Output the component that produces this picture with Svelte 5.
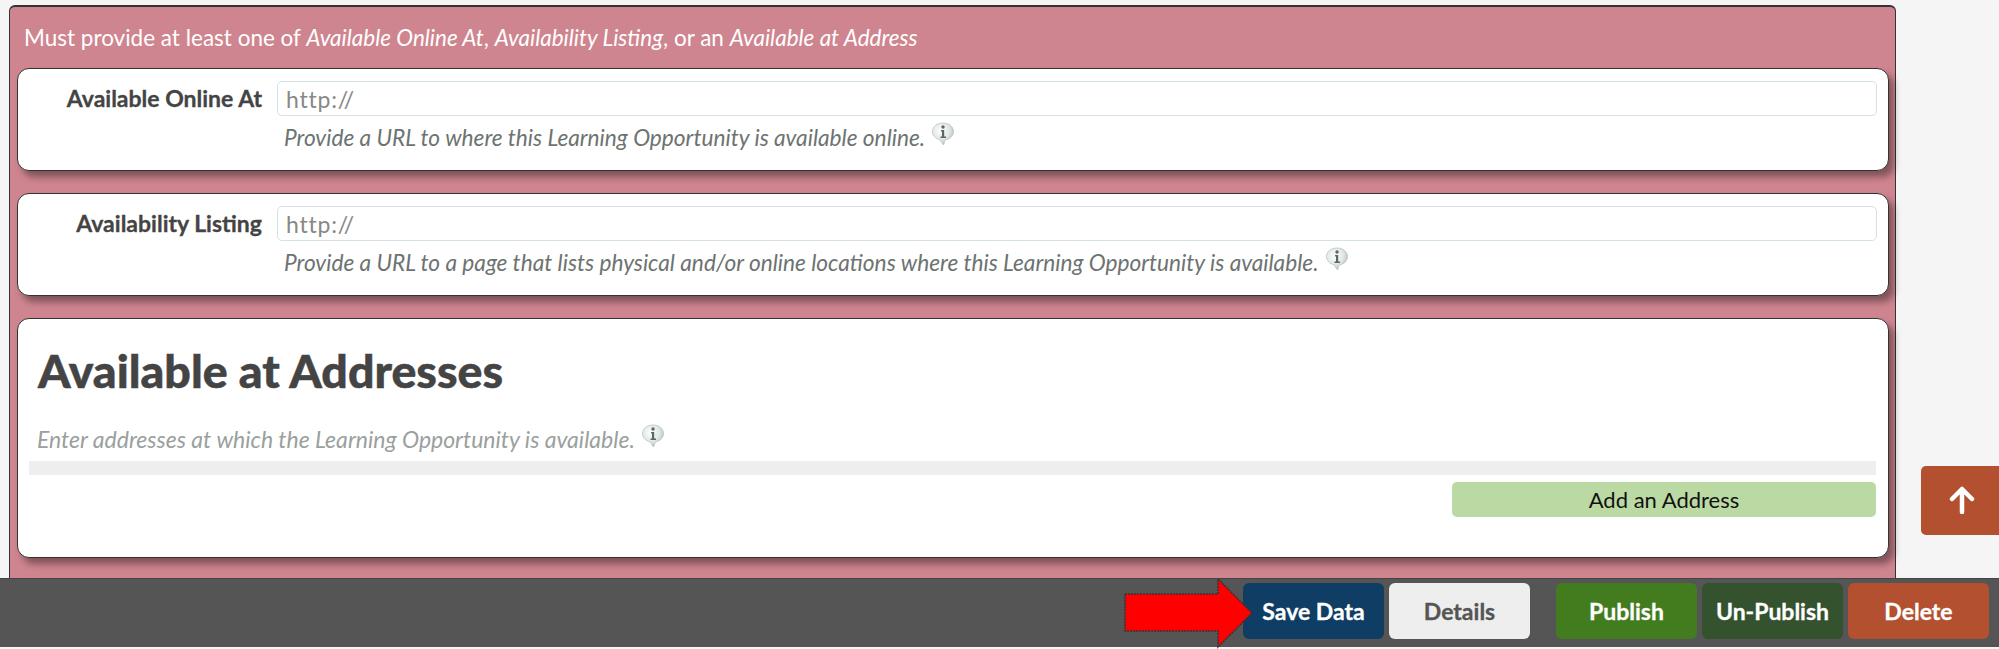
<script>
  const fields = [
    { label: 'Available Online At', help: 'Provide a URL to where this Learning Opportunity is available online.' },
    { label: 'Availability Listing', help: 'Provide a URL to a page that lists physical and/or online locations where this Learning Opportunity is available.' }
  ];
</script>

{#snippet infoIcon()}
  <svg class="info" viewBox="0 0 24 24" width="24" height="24" aria-hidden="true">
    <defs>
      <radialGradient id="bubble" cx="0.4" cy="0.35" r="0.75">
        <stop offset="0" stop-color="#ffffff" />
        <stop offset="0.55" stop-color="#dfe7e4" />
        <stop offset="1" stop-color="#a3b3ae" />
      </radialGradient>
    </defs>
    <path d="M12 1C5.9 1 1.5 4.8 1.5 9.5c0 4.2 3.4 7.400 7.500 8.200L12.500 23l1.800-5.200c4.800-.6 8.200-4 8.200-8.300C22.500 4.800 18.100 1 12 1z" fill="url(#bubble)" stroke="#b7c4c0" stroke-width="0.8" />
    <circle cx="12" cy="5" r="1.700" fill="#5d6664" />
    <path d="M10 8h3.200v6.500H15V16H9.500v-1.500h1.500V9.500H10z" fill="#5d6664" />
  </svg>
{/snippet}

<div class="panel">
  <p class="notice">Must provide at least one of <em>Available Online At</em>, <em>Availability Listing</em>, or an <em>Available at Address</em></p>

  {#each fields as field}
    <div class="card field">
      <label class="field-label" for={field.label}>{field.label}</label>
      <div class="field-body">
        <input id={field.label} type="text" placeholder="http://" />
        <p class="help">{field.help} {@render infoIcon()}</p>
      </div>
    </div>
  {/each}

  <div class="card addresses">
    <h2>Available at Addresses</h2>
    <p class="help light">Enter addresses at which the Learning Opportunity is available. {@render infoIcon()}</p>
    <div class="address-list"></div>
    <div class="add-row">
      <button class="add">Add an Address</button>
    </div>
  </div>
</div>

<button class="to-top" aria-label="Back to top">
  <svg viewBox="0 0 26 28" width="26" height="28">
    <path d="M13 26V3M3 13L13 3l10 10" fill="none" stroke="#fff" stroke-width="4.500" stroke-linecap="round" stroke-linejoin="round" />
  </svg>
</button>

<div class="bottom-bar">
  <div class="group">
    <button class="save">Save Data</button>
    <button class="details">Details</button>
  </div>
  <div class="group">
    <button class="publish">Publish</button>
    <button class="unpublish">Un-Publish</button>
    <button class="delete">Delete</button>
  </div>
</div>

<svg class="callout" width="130" height="72" viewBox="0 0 130 72" aria-hidden="true">
  <polygon points="1,17 94,17 94,2 128,36 94,70 94,54 1,54" fill="#ff0000" stroke="#333" stroke-width="1.500" stroke-dasharray="2 1" />
</svg>

<style>
  :global(body) {
    margin: 0;
    background: #f5f5f5;
    font-family: Lato, "Liberation Sans", sans-serif;
    color: #444;
  }

  p, h2 {
    margin: 0;
  }

  .panel {
    box-sizing: border-box;
    width: 1887px;
    height: 600px;
    margin: 5px 0 0 9px;
    padding: 0 7px;
    background: #cf858f;
    border: 1px solid #333;
    border-top-width: 2px;
    border-bottom: none;
    border-radius: 6px 6px 0 0;
  }

  .notice {
    height: 61px;
    padding: 11px 7px 0;
    box-sizing: border-box;
    color: #fff;
    font-size: 22.500px;
    line-height: 40px;
  }

  .card {
    box-sizing: border-box;
    width: 1872px;
    background: #fff;
    border: 1.500px solid #333;
    border-radius: 12px;
    box-shadow: 5px 6px 7px rgba(0, 0, 0, 0.38);
  }

  .field {
    display: grid;
    grid-template-columns: 244px 1fr;
    column-gap: 15px;
    height: 103px;
    margin-bottom: 22px;
    padding: 12px 11px 0 0;
  }

  .field-label {
    font-weight: 700;
    font-size: 23px;
    line-height: 34px;
    text-align: right;
    -webkit-text-stroke: 0.3px #444;
  }

  input {
    display: block;
    box-sizing: border-box;
    width: 100%;
    height: 35px;
    padding: 0 8px;
    border: 1.500px solid #d5e2e2;
    border-radius: 5px;
    font: 23px Lato, "Liberation Sans", sans-serif;
    letter-spacing: 0.8px;
    outline: none;
  }

  input::placeholder {
    color: #888;
  }

  .help {
    margin-top: 5px;
    padding-left: 7px;
    color: #6d7371;
    font-style: italic;
    font-size: 22.700px;
    line-height: 34px;
    white-space: nowrap;
  }

  .help.light {
    color: #9aa09e;
    margin-top: 0;
    padding: 27px 0 0 8px;
    height: 39px;
    font-size: 23px;
  }

  .info {
    vertical-align: 0;
    margin-left: 1px;
  }

  .addresses {
    height: 240px;
    padding: 0 12px 0 11px;
  }

  h2 {
    padding: 26px 0 0 9px;
    font-size: 46.500px;
    line-height: 50px;
    font-weight: 900;
    color: #444;
    -webkit-text-stroke: 0.5px #444;
  }

  .address-list {
    height: 14px;
    background: #eeeeee;
  }

  .add-row {
    display: flex;
    justify-content: flex-end;
    margin-top: 7px;
  }

  button {
    border: none;
    font-family: inherit;
    cursor: pointer;
  }

  .add {
    width: 424px;
    height: 35px;
    background: #bbdaa3;
    border-radius: 5px;
    color: #111;
    font-size: 22px;
  }

  .to-top {
    position: fixed;
    right: 0;
    top: 466px;
    width: 78px;
    height: 69px;
    padding: 0 0 2px 4px;
    display: flex;
    align-items: center;
    justify-content: center;
    background: #b3502f;
    border-radius: 5px 0 0 5px;
  }

  .bottom-bar {
    position: fixed;
    left: 0;
    right: 0;
    top: 578px;
    height: 69px;
    box-sizing: border-box;
    display: flex;
    justify-content: flex-end;
    align-items: center;
    gap: 26px;
    padding: 0 10px 5px 0;
    background: #555;
    border-top: 1px solid #444;
  }

  .group {
    display: flex;
    gap: 5px;
  }

  .bottom-bar button {
    width: 141px;
    height: 56px;
    border-radius: 6px;
    color: #fff;
    font-size: 23px;
    font-weight: 700;
    -webkit-text-stroke: 0.3px currentColor;
  }

  .bottom-bar .save { background: #0f3d63; }
  .bottom-bar .details { background: #eeeeee; color: #555; }
  .bottom-bar .publish { background: #427c1e; }
  .bottom-bar .unpublish { background: #33522d; }
  .bottom-bar .delete { background: #b3502f; }

  .callout {
    position: fixed;
    left: 1124px;
    top: 577px;
  }
</style>
